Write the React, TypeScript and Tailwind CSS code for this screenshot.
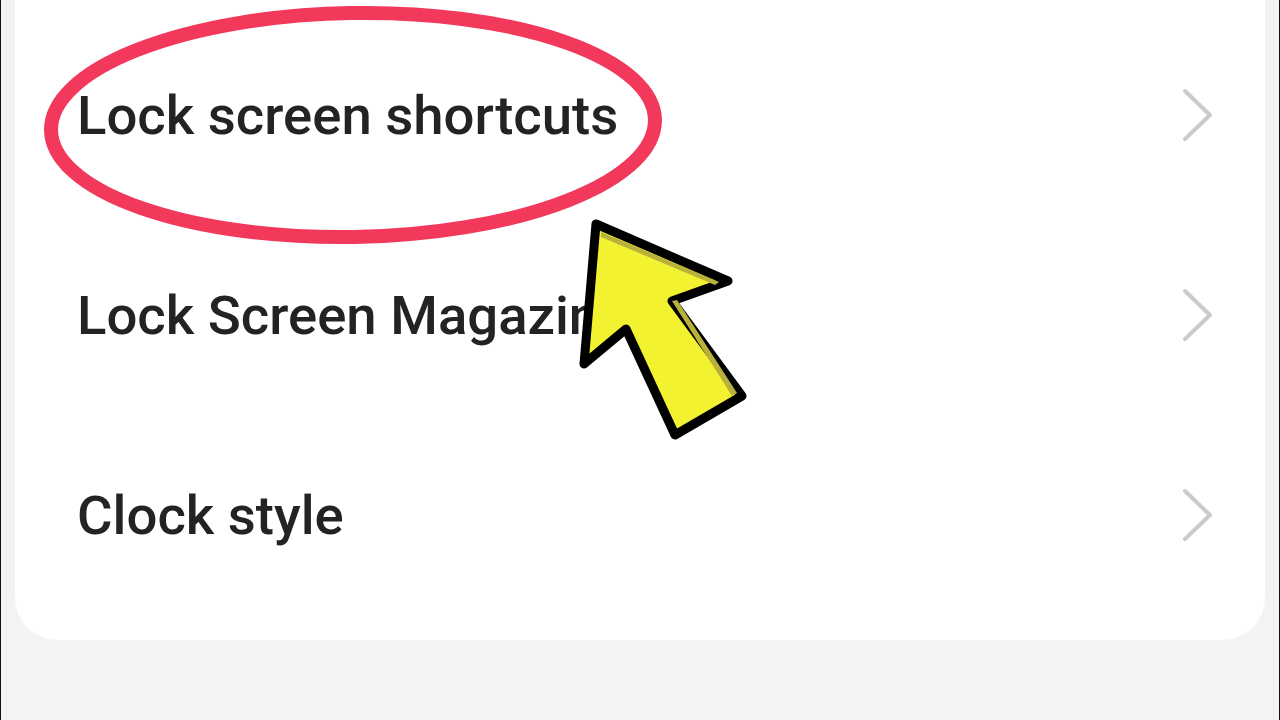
import React from 'react';

const ROWS = ['Lock screen shortcuts', 'Lock Screen Magazine', 'Clock style'];

const Chevron = () => (
  <svg width="34" height="56" viewBox="0 0 34 56" className="shrink-0">
    <path
      d="M5 4 L30 28 L5 52"
      fill="none"
      stroke="#cbcbcb"
      strokeWidth="4"
      strokeLinecap="round"
      strokeLinejoin="round"
    />
  </svg>
);

const Overlay = () => (
  <svg
    className="absolute inset-0 pointer-events-none"
    width="1280"
    height="720"
    viewBox="0 0 1280 720"
  >
    {/* red circle */}
    <ellipse
      cx="352"
      cy="125"
      rx="302"
      ry="112"
      fill="none"
      stroke="#f2385b"
      strokeWidth="14"
      transform="rotate(-1 352 125)"
    />
    {/* yellow arrow */}
    <path
      d="M595 224 L727 281 L671 301 L741 396 L674 435 L625 329 L583 364 Z"
      fill="#f3f231"
      stroke="#000"
      strokeWidth="9"
      strokeLinejoin="round"
    />
    <path d="M600 232 L718 282 L714 285 L600 237 Z" fill="#b8b23c" />
    <path d="M671 301 L676 300 L736 393 L731 396 Z" fill="#b8b23c" />
  </svg>
);

export default function App() {
  return (
    <div className="relative w-[1280px] h-[720px] overflow-hidden bg-[#f3f3f3] border-x border-[#111]">
      <div className="mx-[14px] bg-white rounded-b-[42px] pt-[15px] pb-[25px]">
        {ROWS.map((label) => (
          <div key={label} className="h-[200px] flex items-center pl-[62px] pr-[51px]">
            <span
              className="flex-1 text-[54.5px] font-medium text-[#232323] leading-none"
              style={{ fontFamily: 'Roboto, "Noto Sans", sans-serif' }}
            >
              {label}
            </span>
            <Chevron />
          </div>
        ))}
      </div>
      <Overlay />
    </div>
  );
}
